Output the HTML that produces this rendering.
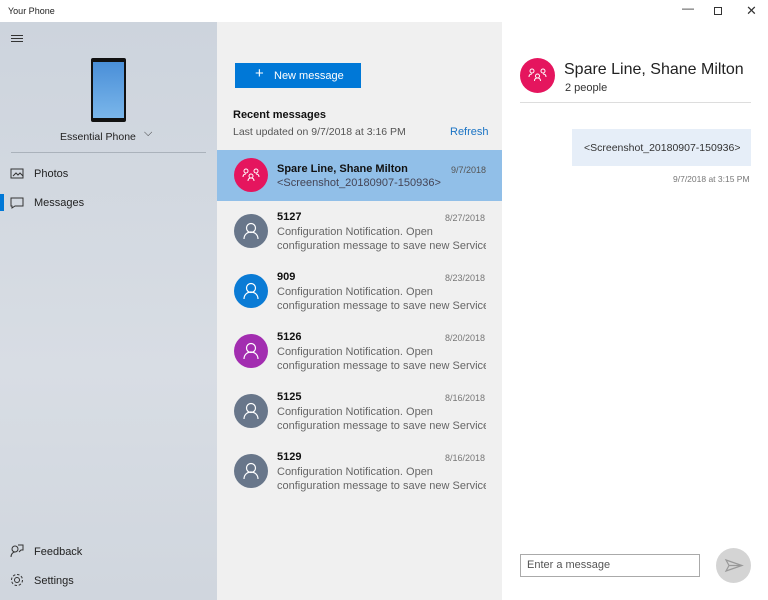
<!DOCTYPE html>
<html><head><meta charset="utf-8"><style>
*{margin:0;padding:0;box-sizing:border-box}
body{width:768px;height:600px;overflow:hidden;font-family:"Segoe UI","Liberation Sans",sans-serif;color:#000;position:relative;background:#fff}
.abs{position:absolute}
.t{position:absolute;white-space:nowrap}
#side{left:0;top:22px;width:217px;height:578px;background:linear-gradient(180deg,#cdd4dd,#d8dde4 60%,#d0d6de)}
#mid{left:217px;top:22px;width:285px;height:578px;background:#f0f0f0}
.av{position:absolute;left:234px;width:34px;height:34px;border-radius:50%}
.av svg{position:absolute;left:0;top:0}
.nm{font-size:11px;font-weight:bold;color:#111}
.dt{font-size:9px;color:#777}
.ln{font-size:11px;color:#666}
</style></head><body>
<div class="t" style="left:8px;top:6px;font-size:9px;color:#222">Your Phone</div>
<div class="t" style="left:682px;top:1px;font-size:12px;color:#333">—</div>
<div class="abs" style="left:714px;top:7px;width:8px;height:8px;border:1px solid #333"></div>
<div class="t" style="left:746px;top:3px;font-size:13px;color:#333">✕</div>
<div id="side" class="abs"></div>
<div id="mid" class="abs"></div>
<div class="abs" style="left:11px;top:35px;width:12px;height:1px;background:#333;box-shadow:0 3px 0 #333,0 6px 0 #333"></div>
<div class="abs" style="left:91px;top:58px;width:35px;height:64px;background:#111;border-radius:2px"></div>
<div class="abs" style="left:93px;top:62px;width:31px;height:56px;background:linear-gradient(180deg,#4a8fd8,#7ab6ea)"></div>
<div class="t" style="left:60px;top:131px;font-size:10.5px;color:#222">Essential Phone</div>
<div class="t" style="left:144px;top:127px;font-size:11px;color:#333">⌵</div>
<div class="abs" style="left:11px;top:152px;width:195px;height:1px;background:#aab2bb"></div>
<svg class="abs" style="left:10px;top:168px" width="14" height="12"><rect x="1" y="1" width="12" height="9" fill="none" stroke="#333"/><path d="M3 8l3-3 2 2 2-2 3 3" fill="none" stroke="#333"/></svg>
<div class="t" style="left:34px;top:168px;font-size:11px;color:#222">Photos</div>
<div class="abs" style="left:0;top:194px;width:4px;height:17px;background:#0078d7"></div>
<svg class="abs" style="left:10px;top:197px" width="14" height="12"><path d="M1 1h12v8H5l-3 2V9H1z" fill="none" stroke="#333"/></svg>
<div class="t" style="left:34px;top:197px;font-size:11px;color:#222">Messages</div>
<svg class="abs" style="left:10px;top:544px" width="14" height="14"><circle cx="5" cy="5" r="3" fill="none" stroke="#333"/><path d="M1 13c0-3 2-5 4-5M8 1h5v5h-2l-2 2" fill="none" stroke="#333"/></svg>
<div class="t" style="left:34px;top:546px;font-size:11px;color:#222">Feedback</div>
<svg class="abs" style="left:10px;top:573px" width="14" height="14"><circle cx="7" cy="7" r="2.5" fill="none" stroke="#333"/><circle cx="7" cy="7" r="5.5" fill="none" stroke="#333" stroke-dasharray="2.5 1.8"/></svg>
<div class="t" style="left:34px;top:575px;font-size:11px;color:#222">Settings</div>

<div class="abs" style="left:235px;top:63px;width:126px;height:25px;background:#0078d7"></div>
<div class="t" style="left:255px;top:65px;font-size:15px;color:#fff;font-weight:300">+</div>
<div class="t" style="left:274px;top:70px;font-size:11px;color:#fff">New message</div>
<div class="t" style="left:233px;top:109px;font-size:11px;font-weight:bold;color:#111">Recent messages</div>
<div class="t" style="left:233px;top:126px;font-size:10.5px;color:#555">Last updated on 9/7/2018 at 3:16 PM</div>
<div class="t" style="left:450px;top:126px;font-size:11px;color:#1a73c4">Refresh</div>
<div class="abs" style="left:217px;top:150px;width:285px;height:51px;background:#91bfe8"></div>
<div class="av" style="top:158px;background:#e5155e"><svg width="34" height="34"><g fill="none" stroke="#fff" stroke-width="1"><circle cx="12" cy="13" r="2"/><circle cx="22" cy="13" r="2"/><circle cx="17" cy="18" r="2"/><path d="M9 19c0-2 1-3 3-3M25 19c0-2-1-3-3-3M14 23c0-2 1-3 3-3s3 1 3 3"/></g></svg></div>
<div class="t nm" style="left:277px;top:163px">Spare Line, Shane Milton</div>
<div class="t dt" style="left:451px;top:165px;color:#555">9/7/2018</div>
<div class="t ln" style="left:277px;top:177px;color:#445">&lt;Screenshot_20180907-150936&gt;</div>

<div id="rows"></div>
<script>
var d=[["5127","8/27/2018","#68768a"],["909","8/23/2018","#0a7bd5"],["5126","8/20/2018","#a22db0"],["5125","8/16/2018","#68768a"],["5129","8/16/2018","#68768a"]];
var h="";
d.forEach(function(r,i){var y=211+i*60;
h+='<div class="av" style="top:'+(y+3)+'px;background:'+r[2]+'"><svg width="34" height="34"><g fill="none" stroke="#fff" stroke-width="1.2"><circle cx="17" cy="14" r="4.5"/><path d="M10 25c0-4 3-7 7-7s7 3 7 7"/></g></svg></div>';
h+='<div class="t nm" style="left:277px;top:'+y+'px">'+r[0]+'</div>';
h+='<div class="t dt" style="left:445px;top:'+(y+2)+'px">'+r[1]+'</div>';
h+='<div class="t ln" style="left:277px;top:'+(y+15)+'px">Configuration Notification. Open</div>';
h+='<div class="abs" style="left:277px;top:'+(y+29)+'px;width:209px;overflow:hidden;white-space:nowrap;font-size:11px;color:#666">configuration message to save new Service Settings</div>';
});
document.getElementById("rows").outerHTML=h;
</script>

<div class="abs" style="left:520px;top:58px;width:35px;height:35px;border-radius:50%;background:#e5155e"><svg width="35" height="35"><g fill="none" stroke="#fff" stroke-width="1"><circle cx="12" cy="13" r="2"/><circle cx="23" cy="13" r="2"/><circle cx="17.5" cy="18" r="2"/><path d="M9 19c0-2 1-3 3-3M26 19c0-2-1-3-3-3M14.5 23c0-2 1-3 3-3s3 1 3 3"/></g></svg></div>
<div class="t" style="left:564px;top:61px;font-size:16px;color:#222">Spare Line, Shane Milton</div>
<div class="t" style="left:565px;top:82px;font-size:11px;color:#333">2 people</div>
<div class="abs" style="left:520px;top:102px;width:231px;height:1px;background:#ddd"></div>
<div class="abs" style="left:572px;top:129px;width:179px;height:37px;background:#e6eef8"></div>
<div class="t" style="left:584px;top:142px;font-size:10.5px;color:#333">&lt;Screenshot_20180907-150936&gt;</div>
<div class="t" style="left:673px;top:174px;font-size:8.5px;color:#777">9/7/2018 at 3:15 PM</div>
<div class="abs" style="left:520px;top:554px;width:180px;height:23px;border:1px solid #aaa;background:#fff"></div>
<div class="t" style="left:527px;top:559px;font-size:11px;color:#555">Enter a message</div>
<div class="abs" style="left:716px;top:548px;width:35px;height:35px;border-radius:50%;background:#d4d4d4"><svg width="35" height="35"><path d="M10 12l16 5.5-16 5.5 3-5.5z M13 17.5h13" fill="none" stroke="#999" stroke-width="1.2"/></svg></div>
</body></html>
